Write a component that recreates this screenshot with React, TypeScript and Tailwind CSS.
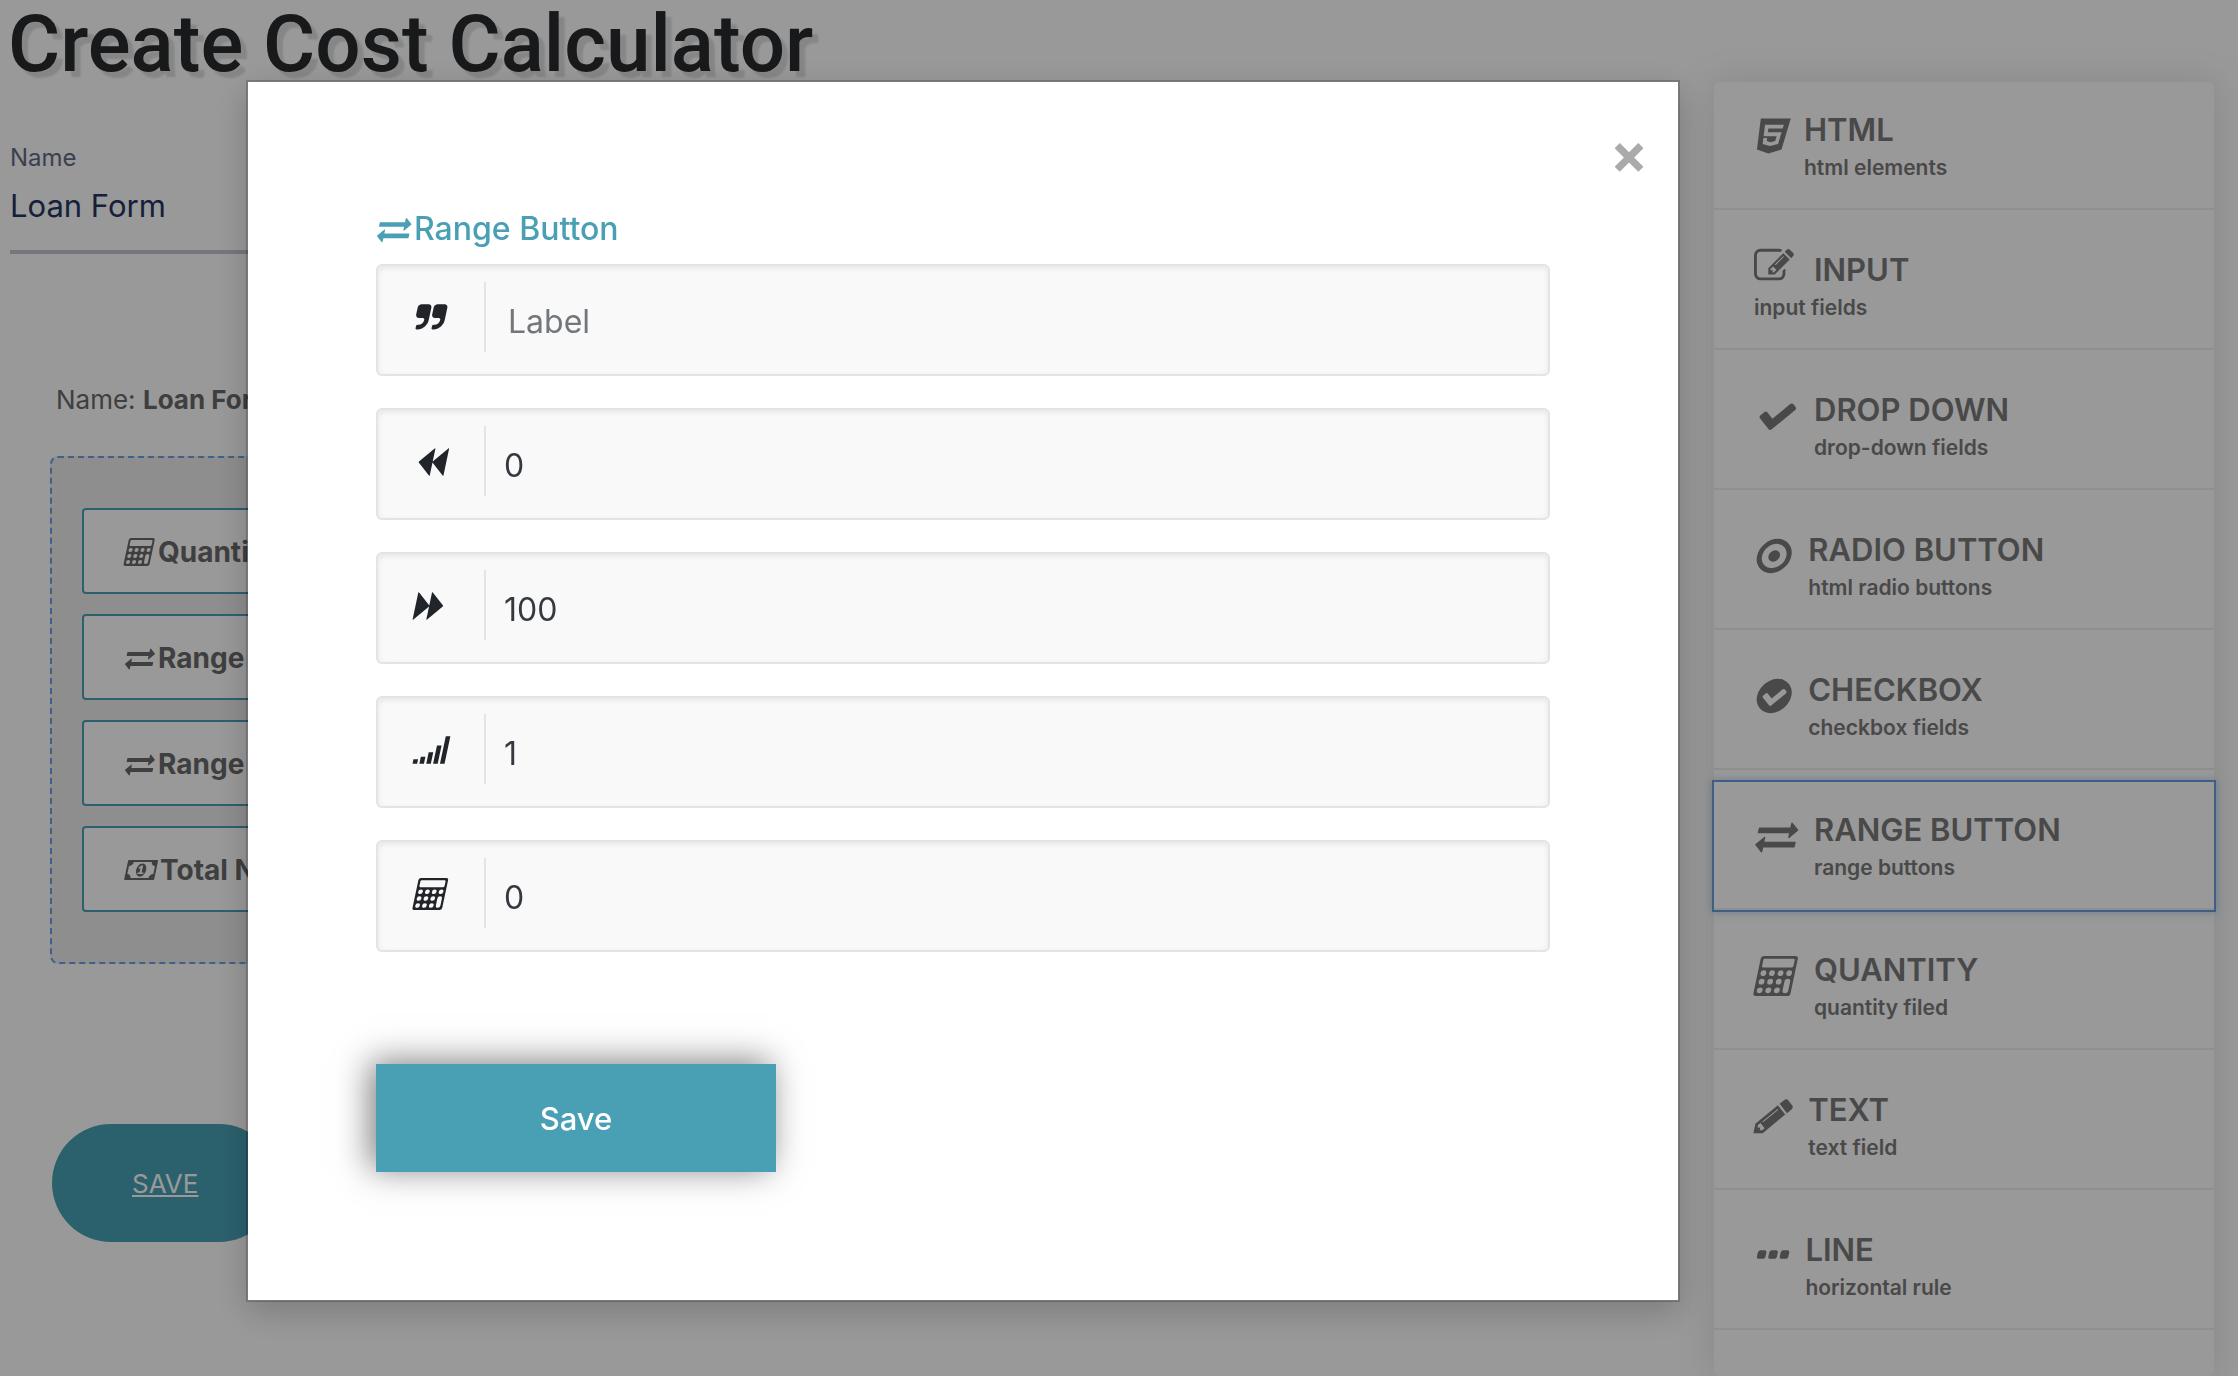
import { useState } from 'react';
import clsx from 'clsx';

type IconProps = { className?: string };

const Glyph = ({
  d,
  width = 1792,
  upright = false,
  className,
}: IconProps & { d: string; width?: number; upright?: boolean }) => (
  <svg
    viewBox={`0 0 ${width} 1792`}
    fill="currentColor"
    fillRule="evenodd"
    aria-hidden="true"
    className={clsx('shrink-0 w-auto overflow-visible', !upright && 'origin-[50%_86%] -skew-x-12', className)}
  >
    <path d={d} />
  </svg>
);

const Html5Icon = ({ className }: IconProps) => (
  <svg
    viewBox="0 0 384 512"
    fill="currentColor"
    aria-hidden="true"
    className={clsx('shrink-0 w-auto overflow-visible origin-[50%_86%] -skew-x-12', className)}
  >
    <path d="M0 32l34.9 395.8L191.5 480l157.6-52.2L384 32H0zm308.2 127.9H124.4l4.1 49.4h175.6l-13.6 148.4-97.9 27v.3h-1.1l-98.7-27.3-6-75.8h47.7L138 320l53.5 14.5 53.7-14.5 6-62.2H84.3L71.5 112.2h241.1l-4.4 47.7z" />
  </svg>
);

const ExchangeIcon = ({ className }: IconProps) => (
  <Glyph
    className={className}
    d="M1792 1184v192q0 13-9.5 22.5t-22.5 9.5h-1376v192q0 13-9.5 22.5t-22.5 9.5q-12 0-24-10l-319-320q-9-9-9-22 0-14 9-23l320-320q9-9 23-9 13 0 22.5 9.5t9.5 22.5v192h1376q13 0 22.5 9.5t9.5 22.5zm0-544q0 14-9 23l-320 320q-9 9-23 9-13 0-22.5-9.5t-9.5-22.5v-192h-1376q-13 0-22.5-9.5t-9.5-22.5v-192q0-13 9.5-22.5t22.5-9.5h1376v-192q0-14 9-23t23-9q12 0 24 10l319 319q9 9 9 23z"
  />
);

const key = (x: number, y: number) => `M${x - 128} ${y}a128 128 0 1 0 256 0a128 128 0 1 0-256 0z`;

const calculatorKeys = [
  [256, 768], [640, 768], [1024, 768], [1408, 768],
  [256, 1152], [640, 1152], [1024, 1152],
  [256, 1536], [640, 1536], [1024, 1536],
].map(([x, y]) => key(x, y)).join('');

const CalculatorIcon = ({ className }: IconProps) => (
  <Glyph
    className={className}
    d={`M128 0h1408a128 128 0 0 1 128 128v1536a128 128 0 0 1-128 128h-1408a128 128 0 0 1-128-128v-1536a128 128 0 0 1 128-128zM192 128a64 64 0 0 0-64 64v256a64 64 0 0 0 64 64h1280a64 64 0 0 0 64-64v-256a64 64 0 0 0-64-64zM1280 1152v384a128 128 0 0 0 256 0v-384a128 128 0 0 0-256 0z${calculatorKeys}`}
  />
);

const EditIcon = ({ className }: IconProps) => (
  <Glyph
    upright
    className={className}
    d="M888 1184l116-116-152-152-116 116v56h96v96h56zm440-720q-16-16-33 1l-350 350q-17 17-1 33t33-1l350-350q17-17 1-33zm80 594v190q0 119-84.5 203.5t-203.5 84.5h-832q-119 0-203.5-84.5t-84.5-203.5v-832q0-119 84.5-203.5t203.5-84.5h832q63 0 117 25 15 7 18 23 3 17-9 29l-49 49q-14 14-32 8-23-6-45-6h-832q-66 0-113 47t-47 113v832q0 66 47 113t113 47h832q66 0 113-47t47-113v-126q0-13 9-22l64-64q15-15 35-7t20 29zm-96-738l288 288-672 672h-288v-288zm444 132l-92 92-288-288 92-92q28-28 68-28t68 28l152 152q28 28 28 68t-28 68z"
  />
);

const CheckIcon = ({ className }: IconProps) => (
  <Glyph
    className={className}
    d="M1671 566q0 40-28 68l-724 724-136 136q-28 28-68 28t-68-28l-136-136-362-362q-28-28-28-68t28-68l136-136q28-28 68-28t68 28l294 295 656-657q28-28 68-28t68 28l136 136q28 28 28 68z"
  />
);

const DotCircleIcon = ({ className }: IconProps) => (
  <Glyph
    width={1536}
    className={className}
    d="M0 896a768 768 0 1 0 1536 0a768 768 0 1 0-1536 0zM224 896a544 544 0 1 0 1088 0a544 544 0 1 0-1088 0zM512 896a256 256 0 1 0 512 0a256 256 0 1 0-512 0z"
  />
);

const CheckCircleIcon = ({ className }: IconProps) => (
  <Glyph
    width={1536}
    className={className}
    d="M1284 734q0-28-18-46l-91-90q-19-19-45-19t-45 19l-408 407-226-226q-19-19-45-19t-45 19l-91 90q-18 18-18 46 0 27 18 45l362 362q19 19 45 19 27 0 46-19l543-543q18-18 18-45zm252 162q0 209-103 385.5t-279.5 279.5-385.5 103-385.5-103-279.5-279.5-103-385.5 103-385.5 279.5-279.5 385.5-103 385.5 103 279.5 279.5 103 385.5z"
  />
);

const PencilIcon = ({ className }: IconProps) => (
  <Glyph
    width={1536}
    className={className}
    d="M363 1536l91-91-235-235-91 91v107h128v128h107zm523-928q0-22-22-22-10 0-17 7l-542 542q-7 7-7 17 0 22 22 22 10 0 17-7l542-542q7-7 7-17zm-54-192l416 416-832 832h-416v-416zm683 96q0 53-37 90l-166 166-416-416 166-165q36-38 90-38 53 0 91 38l235 234q37 39 37 91z"
  />
);

const EllipsisIcon = ({ className }: IconProps) => (
  <Glyph
    width={1408}
    className={className}
    d="M384 736v192q0 40-28 68t-68 28h-192q-40 0-68-28t-28-68v-192q0-40 28-68t68-28h192q40 0 68 28t28 68zm512 0v192q0 40-28 68t-68 28h-192q-40 0-68-28t-28-68v-192q0-40 28-68t68-28h192q40 0 68 28t28 68zm512 0v192q0 40-28 68t-68 28h-192q-40 0-68-28t-28-68v-192q0-40 28-68t68-28h192q40 0 68 28t28 68z"
  />
);

const QuoteIcon = ({ className }: IconProps) => (
  <Glyph
    width={1664}
    className={className}
    d="M768 320v704q0 104-40.5 198.5t-109.5 163.5-163.5 109.5-198.5 40.5h-64q-26 0-45-19t-19-45v-128q0-26 19-45t45-19h64q106 0 181-75t75-181v-32q0-40-28-68t-68-28h-224q-80 0-136-56t-56-136v-384q0-80 56-136t136-56h384q80 0 136 56t56 136zm896 0v704q0 104-40.5 198.5t-109.5 163.5-163.5 109.5-198.5 40.5h-64q-26 0-45-19t-19-45v-128q0-26 19-45t45-19h64q106 0 181-75t75-181v-32q0-40-28-68t-68-28h-224q-80 0-136-56t-56-136v-384q0-80 56-136t136-56h384q80 0 136 56t56 136z"
  />
);

const BackwardIcon = ({ className }: IconProps) => (
  <Glyph
    className={className}
    d="M1683 141q19-19 32-13t13 32v1472q0 26-13 32t-32-13l-710-710q-9-9-13-19v710q0 26-13 32t-32-13l-710-710q-19-19-19-45t19-45l710-710q19-19 32-13t13 32v710q4-10 13-19z"
  />
);

const ForwardIcon = ({ className }: IconProps) => (
  <Glyph
    className={className}
    d="M45 1651q-19 19-32 13t-13-32v-1472q0-26 13-32t32 13l710 710q9 9 13 19v-710q0-26 13-32t32 13l710 710q19 19 19 45t-19 45l-710 710q-19 19-32 13t-13-32v-710q-4 10-13 19z"
  />
);

const SignalIcon = ({ className }: IconProps) => (
  <Glyph
    className={className}
    d="M0 1408h256v256h-256zM384 1280h256v384h-256zM768 1024h256v640h-256zM1152 640h256v1024h-256zM1536 128h256v1536h-256z"
  />
);

const MoneyIcon = ({ className }: IconProps) => (
  <Glyph
    width={1920}
    className={className}
    d="M768 1152h384v-96h-128v-448h-114l-148 137 77 80q42-37 55-57h2v288h-128v96zm512-256q0 70-21 142t-59.5 134-101.5 101-138 39-138-39-101.5-101-59.5-134-21-142 21-142 59.5-134 101.5-101 138-39 138 39 101.5 101 59.5 134 21 142zm512 256v-512q-106 0-181-75t-75-181h-1152q0 106-75 181t-181 75v512q106 0 181 75t75 181h1152q0-106 75-181t181-75zm128-832v1152q0 26-19 45t-45 19h-1792q-26 0-45-19t-19-45v-1152q0-26 19-45t45-19h1792q26 0 45 19t19 45z"
  />
);

type IconType = React.FC<IconProps>;

const elements: { title: string; hint: string; icon: IconType; stacked?: boolean }[] = [
  { title: 'HTML', hint: 'html elements', icon: Html5Icon },
  { title: 'INPUT', hint: 'input fields', icon: EditIcon, stacked: true },
  { title: 'DROP DOWN', hint: 'drop-down fields', icon: CheckIcon },
  { title: 'RADIO BUTTON', hint: 'html radio buttons', icon: DotCircleIcon },
  { title: 'CHECKBOX', hint: 'checkbox fields', icon: CheckCircleIcon },
  { title: 'RANGE BUTTON', hint: 'range buttons', icon: ExchangeIcon },
  { title: 'QUANTITY', hint: 'quantity filed', icon: CalculatorIcon },
  { title: 'TEXT', hint: 'text field', icon: PencilIcon },
  { title: 'LINE', hint: 'horizontal rule', icon: EllipsisIcon },
];

const formRows: { label: string; icon: IconType }[] = [
  { label: 'Quantity', icon: CalculatorIcon },
  { label: 'Range Button', icon: ExchangeIcon },
  { label: 'Range Button', icon: ExchangeIcon },
  { label: 'Total Number', icon: MoneyIcon },
];

const rangeFields: { name: string; value: string; icon: IconType }[] = [
  { name: 'Label', value: '', icon: QuoteIcon },
  { name: 'Minimum', value: '0', icon: BackwardIcon },
  { name: 'Maximum', value: '100', icon: ForwardIcon },
  { name: 'Step', value: '1', icon: SignalIcon },
  { name: 'Default', value: '0', icon: CalculatorIcon },
];

const ElementList = ({ active }: { active: string }) => (
  <aside className="mt-[82px] mr-6 flex w-[500px] shrink-0 flex-col gap-3 rounded-md bg-white text-[#7a7a7a] shadow-[0_0_40px_rgba(0,0,0,0.12)]">
    {elements.map(({ title, hint, icon: Icon, stacked }) => (
      <button
        key={title}
        type="button"
        className={clsx(
          'flex h-32 shrink-0 items-start border-b-2 border-[#eeeeee] px-10 text-left',
          title === active && 'outline-2 outline-[#649fdb] shadow-[0_0_8px_2px_rgba(100,159,219,0.5)]',
        )}
      >
        {stacked ? (
          <span className="flex flex-col pt-6">
            <span className="flex items-start gap-5">
              <Icon className="h-10" />
              <span className="pt-1 text-[31px] leading-10 font-semibold">{title}</span>
            </span>
            <span className="text-[21px] leading-9 font-semibold">{hint}</span>
          </span>
        ) : (
          <span className="flex items-start gap-5 pt-7">
            <Icon className="mt-1.5 h-10" />
            <span className="flex flex-col">
              <span className="text-[31px] leading-10 font-semibold">{title}</span>
              <span className="text-[21px] leading-9 font-semibold">{hint}</span>
            </span>
          </span>
        )}
      </button>
    ))}
    <div className="h-32 shrink-0" />
  </aside>
);

const RangeModal = ({ onClose }: { onClose: () => void }) => {
  const [values, setValues] = useState(rangeFields.map((f) => f.value));

  return (
    <div className="fixed inset-0 bg-black/40 pt-20 pr-[558px] pl-[246px]">
      <div
        role="dialog"
        aria-labelledby="range-title"
        className="border-2 border-black/20 bg-white bg-clip-padding px-32 pt-12 pb-32 shadow-[0_10px_32px_rgba(0,0,0,0.2)]"
      >
        <div className="-mr-[98px] flex justify-end">
          <button
            type="button"
            aria-label="Close"
            onClick={onClose}
            className="flex h-12 items-center text-[56px] leading-none font-bold text-[#aaaaaa]"
          >
            ×
          </button>
        </div>
        <h2
          id="range-title"
          className="mt-7 mb-3 flex items-center gap-1.5 text-[32px] leading-[46px] font-medium text-[#49a0b5]"
        >
          <ExchangeIcon className="h-8" />
          Range Button
        </h2>
        <form className="flex flex-col" onSubmit={(e) => e.preventDefault()}>
          <div className="flex flex-col gap-8">
            {rangeFields.map(({ name, icon: Icon }, i) => (
              <label
                key={name}
                className="flex h-28 items-start rounded-md border-2 border-[#e4e4e4] bg-[#f9f9f9] shadow-[inset_0_2px_6px_rgba(0,0,0,0.08)]"
              >
                <span className="mt-4 flex h-[70px] w-[108px] shrink-0 items-start border-r-2 border-[#e4e4e4] pt-5 pl-[35px] text-[#212529]">
                  <Icon className="h-8" />
                </span>
                <input
                  type="text"
                  aria-label={name}
                  placeholder={i === 0 ? name : undefined}
                  value={values[i]}
                  onChange={(e) => setValues(values.map((v, j) => (j === i ? e.target.value : v)))}
                  className="h-full min-w-0 flex-1 bg-transparent px-[18px] pt-0.5 text-[32px] text-[#343a40] outline-none placeholder:text-[#73777c] placeholder-shown:pl-[22px]"
                />
              </label>
            ))}
          </div>
          <button
            type="submit"
            className="mt-28 h-[108px] w-[400px] bg-[#49a0b5] pt-0.5 text-[31px] font-medium text-white shadow-[-6px_-3px_32px_rgba(0,0,0,0.5)]"
          >
            Save
          </button>
        </form>
      </div>
    </div>
  );
};

export default function App() {
  const [open, setOpen] = useState(true);
  const [name, setName] = useState('Loan Form');

  return (
    <div className="flex h-screen overflow-hidden bg-white font-[Inter,'Liberation_Sans',sans-serif]">
      <main className="min-w-0 flex-1 pr-20">
        <h1 className="pt-1 pl-2 font-[Roboto,Inter,sans-serif] text-[80px] leading-[80px] font-medium text-[#282a2d] [text-shadow:6px_6px_2px_#e0e0e0]">
          Create Cost Calculator
        </h1>
        <div className="mt-14 ml-[10px] flex flex-col border-b-4 border-[#c3c5d5]">
          <label htmlFor="form-name" className="text-2xl leading-9 text-[#636c88]">
            Name
          </label>
          <input
            id="form-name"
            value={name}
            onChange={(e) => setName(e.target.value)}
            className="h-[74px] pb-4 text-[31px] text-[#263661] outline-none"
          />
        </div>
        <section className="ml-[50px] text-[#696969]">
          <p className="mt-[126px] pl-[6px] text-[26px] leading-10">
            Name: <strong>{name}</strong>
          </p>
          <div className="mt-9 flex flex-col gap-5 rounded-lg border-2 border-dashed border-[#68a2e4] bg-[#ededed] px-[30px] py-[50px]">
            {formRows.map(({ label, icon: Icon }, i) => (
              <div
                key={i}
                className="flex h-[86px] items-center gap-1.5 rounded border-2 border-[#48a2b6] bg-white px-10 pt-0.5 text-[28px] font-bold"
              >
                <Icon className="h-7" />
                {label}
              </div>
            ))}
          </div>
          <a
            href="#save"
            className="mt-40 ml-0.5 inline-flex h-[118px] items-center rounded-[60px] bg-[#48a2b6] px-20 text-[26px] text-white underline"
          >
            SAVE
          </a>
        </section>
      </main>
      <ElementList active="RANGE BUTTON" />
      {open && <RangeModal onClose={() => setOpen(false)} />}
    </div>
  );
}
